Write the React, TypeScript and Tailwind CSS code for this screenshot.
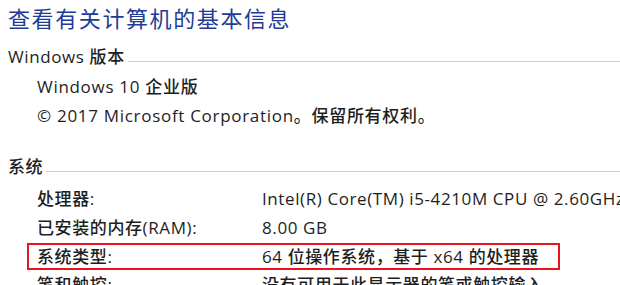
const font = "font-['Open_Sans','Noto_Sans_CJK_SC',sans-serif]"

const rows = [
  { label: '处理器:', value: 'Intel(R) Core(TM) i5-4210M CPU @ 2.60GHz   2.59 GHz' },
  { label: '已安装的内存(RAM):', value: '8.00 GB' },
  { label: '系统类型:', value: '64 位操作系统，基于 x64 的处理器', highlight: true },
  { label: '笔和触控:', value: '没有可用于此显示器的笔或触控输入' },
]

function SectionHeader({ title }: { title: string }) {
  return (
    <div className="flex h-[30px] items-center pl-[8px]">
      <span className="whitespace-nowrap text-[17px] tracking-[0.6px] text-[#1e1e1e]">{title}</span>
      <div className="ml-[3px] mt-[8px] h-px flex-1 bg-[#cfcfcf]" />
    </div>
  )
}

export default function App() {
  return (
    <div className={`h-[285px] w-[620px] overflow-hidden bg-white font-medium ${font}`}>
      <div className="flex h-[36px] items-center pl-[8px]">
        <h1 className="text-[22px] font-normal leading-none tracking-[1.6px] text-[#1e3c96]">
          查看有关计算机的基本信息
        </h1>
      </div>
      <div className="mt-[6px]">
        <SectionHeader title="Windows 版本" />
      </div>
      <div className="text-[17px] tracking-[0.7px] text-[#1e1e1e]">
        <div className="flex h-[29px] items-center pl-[37px]">Windows 10 企业版</div>
        <div className="flex h-[29px] items-center whitespace-nowrap pl-[37px]">
          © 2017 Microsoft Corporation。保留所有权利。
        </div>
      </div>
      <div className="mt-[22px]">
        <SectionHeader title="系统" />
      </div>
      <div className="mt-[2px] flex flex-col text-[17px] tracking-[0.6px] text-[#1e1e1e]">
        {rows.map((row) =>
          row.highlight ? (
            <div
              key={row.label}
              className="mt-px ml-[27px] flex h-[27px] w-[533px] items-center border-2 border-[#e8141e] pl-[8px]"
            >
              <span className="w-[225px] shrink-0">{row.label}</span>
              <span className="whitespace-nowrap">{row.value}</span>
            </div>
          ) : (
            <div key={row.label} className="flex h-[29px] items-center pl-[37px]">
              <span className="w-[225px] shrink-0">{row.label}</span>
              <span className="whitespace-nowrap">{row.value}</span>
            </div>
          ),
        )}
      </div>
    </div>
  )
}
